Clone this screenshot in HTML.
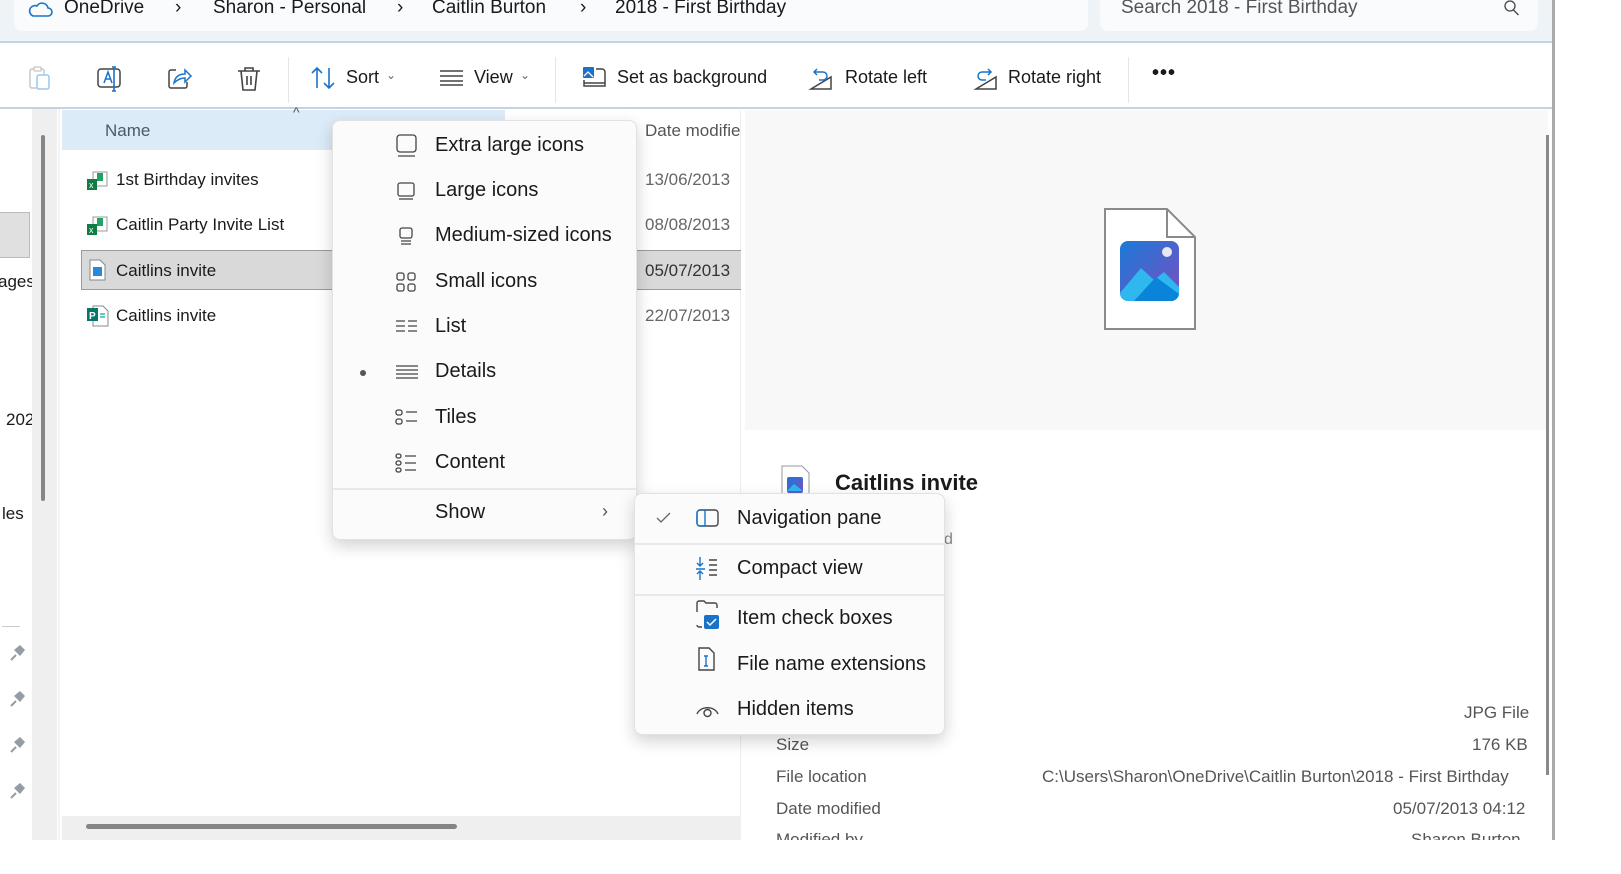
<!DOCTYPE html>
<html><head><meta charset="utf-8"><style>
*{margin:0;padding:0;box-sizing:border-box}
body{width:1621px;height:874px;background:#fff;font-family:"Liberation Sans","DejaVu Sans",sans-serif;color:#1a1a1a;position:relative;overflow:hidden}
.a{position:absolute}
.t{position:absolute;white-space:nowrap}
svg{position:absolute;overflow:visible}
</style></head><body>
<div class="a" style="left:0;top:0;width:1553px;height:42px;background:#eef3f8"></div>
<div class="a" style="left:14px;top:-10px;width:1074px;height:41px;background:#f9fbfd;border-radius:8px"></div>
<div class="a" style="left:1100px;top:-10px;width:438px;height:41px;background:#f9fbfd;border-radius:8px"></div>
<svg style="left:30px;top:0" width="24" height="18"><path d="M3 16h15a4 4 0 0 0 0-8 6 6 0 0 0-11-2A5 5 0 0 0 3 16z" fill="none" stroke="#1a73c8" stroke-width="1.6"/></svg>
<div class="t" style="left:64px;top:-3px;font-size:19px">OneDrive</div>
<div class="t" style="left:175px;top:-3px;font-size:19px">›</div>
<div class="t" style="left:213px;top:-3px;font-size:19px">Sharon - Personal</div>
<div class="t" style="left:397px;top:-3px;font-size:19px">›</div>
<div class="t" style="left:432px;top:-3px;font-size:19px">Caitlin Burton</div>
<div class="t" style="left:580px;top:-3px;font-size:19px">›</div>
<div class="t" style="left:615px;top:-3px;font-size:19px">2018 - First Birthday</div>
<div class="t" style="left:1121px;top:-3px;font-size:19px;color:#555">Search 2018 - First Birthday</div>
<svg style="left:1502px;top:0" width="18" height="18"><circle cx="8" cy="6" r="5" fill="none" stroke="#444" stroke-width="1.3"/><path d="M11.5 10l5 5" stroke="#444" stroke-width="1.3"/></svg>
<div class="a" style="left:0;top:41px;width:1553px;height:2px;background:#c4d3df"></div>
<div class="a" style="left:0;top:43px;width:1553px;height:65px;background:#fff"></div>
<div class="a" style="left:0;top:107px;width:1553px;height:2px;background:#c4d3df"></div>
<svg style="left:28px;top:66px" width="24" height="24"><rect x="2" y="3" width="14" height="19" rx="2" fill="none" stroke="#c7c7c7" stroke-width="1.5"/><rect x="6" y="1" width="7" height="4" rx="1" fill="#fff" stroke="#c7c7c7" stroke-width="1.3"/><rect x="9" y="9" width="12" height="14" rx="2" fill="#fff" stroke="#9cc7ee" stroke-width="1.5"/></svg>
<svg style="left:97px;top:66px" width="26" height="26"><rect x="1" y="3" width="22" height="18" rx="3" fill="none" stroke="#444" stroke-width="1.5"/><path d="M7 17l4-11 4 11M8.5 13h5" fill="none" stroke="#1a73c8" stroke-width="1.5"/><path d="M17 1v24M15 1h4M15 25h4" stroke="#1a73c8" stroke-width="1.6" /></svg>
<svg style="left:167px;top:66px" width="26" height="26"><path d="M9 4H4a2 2 0 0 0-2 2v14a2 2 0 0 0 2 2h14a2 2 0 0 0 2-2v-4" fill="none" stroke="#444" stroke-width="1.5"/><path d="M7 17c1-6 5-9 11-9V4l6 6-6 6v-4c-5 0-8 2-11 5z" fill="none" stroke="#1a73c8" stroke-width="1.5"/></svg>
<svg style="left:237px;top:66px" width="24" height="26"><path d="M1 5h22M8 5V2h8v3M4 5l2 19h12l2-19M10 10v9M14 10v9" fill="none" stroke="#444" stroke-width="1.6"/></svg>
<div class="a" style="left:288px;top:57px;width:1px;height:46px;background:#e5e5e5"></div>
<svg style="left:311px;top:66px" width="26" height="24"><path d="M6 22V2M1 7l5-5 5 5" fill="none" stroke="#1a73c8" stroke-width="1.6"/><path d="M18 2v20M13 17l5 5 5-5" fill="none" stroke="#1a73c8" stroke-width="1.6"/></svg>
<div class="t" style="left:346px;top:67px;font-size:18px">Sort</div>
<div class="t" style="left:386px;top:68px;font-size:12px;color:#666">⌄</div>
<svg style="left:440px;top:70px" width="24" height="16"><path d="M0 1h23M0 6h23M0 11h23M0 15h23" stroke="#444" stroke-width="1.4"/></svg>
<div class="t" style="left:474px;top:67px;font-size:18px">View</div>
<div class="t" style="left:520px;top:68px;font-size:12px;color:#666">⌄</div>
<div class="a" style="left:555px;top:57px;width:1px;height:46px;background:#e5e5e5"></div>
<svg style="left:582px;top:66px" width="26" height="24"><rect x="1" y="1" width="11" height="11" rx="1" fill="#1a73c8"/><path d="M2 10l4-4 5 5" stroke="#fff" stroke-width="1.3" fill="none"/><path d="M14 3h6a3 3 0 0 1 3 3v14H2v-6M2 17h21" fill="none" stroke="#444" stroke-width="1.5"/></svg>
<div class="t" style="left:617px;top:67px;font-size:18px">Set as background</div>
<svg style="left:810px;top:67px" width="24" height="24"><path d="M1 22h20V10z" fill="none" stroke="#444" stroke-width="1.5"/><path d="M7 2L4 5l3 3M4 5h9a4 4 0 0 1 0 8H9" fill="none" stroke="#1a73c8" stroke-width="1.5"/></svg>
<div class="t" style="left:845px;top:67px;font-size:18px">Rotate left</div>
<svg style="left:973px;top:67px" width="24" height="24"><path d="M3 22h20V10z" fill="none" stroke="#444" stroke-width="1.5"/><path d="M15 2l3 3-3 3M18 5H9a4 4 0 0 0 0 8h4" fill="none" stroke="#1a73c8" stroke-width="1.5"/></svg>
<div class="t" style="left:1008px;top:67px;font-size:18px">Rotate right</div>
<div class="a" style="left:1128px;top:57px;width:1px;height:46px;background:#e5e5e5"></div>
<div class="t" style="left:1152px;top:62px;font-size:20px;letter-spacing:1px;font-weight:bold">•••</div>
<div class="a" style="left:0;top:109px;width:32px;height:731px;background:#fff"></div>
<div class="a" style="left:0;top:212px;width:30px;height:46px;background:#e0e0e0;border:1px solid #bbb;border-left:none"></div>
<div class="t" style="left:-2px;top:272px;font-size:17px">ages</div>
<div class="t" style="left:6px;top:410px;font-size:17px">202</div>
<div class="t" style="left:2px;top:504px;font-size:17px">les</div>
<div class="a" style="left:2px;top:626px;width:18px;height:1px;background:#ccc"></div>
<svg style="left:10px;top:644px" width="16" height="180"><g fill="#959ca3"><path d="M4 6l6-5 5 5-5 6z"/><path d="M4 52l6-5 5 5-5 6z"/><path d="M4 98l6-5 5 5-5 6z"/><path d="M4 144l6-5 5 5-5 6z"/></g><g stroke="#959ca3" stroke-width="2"><path d="M1 16l5-5M1 62l5-5M1 108l5-5M1 154l5-5"/></g></svg>
<div class="a" style="left:32px;top:109px;width:25px;height:731px;background:#efefef"></div>
<div class="a" style="left:41px;top:135px;width:4px;height:366px;background:#868686;border-radius:2px"></div>
<div class="a" style="left:58px;top:109px;width:2px;height:731px;background:#f4f4f4"></div>
<div class="a" style="left:62px;top:110px;width:443px;height:40px;background:#dcebf8"></div>
<div class="t" style="left:105px;top:121px;font-size:17px;color:#4d5a66">Name</div>
<div class="t" style="left:293px;top:104px;font-size:14px;color:#555">^</div>
<div class="a" style="left:740px;top:110px;width:1px;height:730px;background:#eee"></div>
<div class="t" style="left:645px;top:121px;font-size:17px;color:#555">Date modifie</div>
<svg style="left:87px;top:170px" width="22" height="22"><rect x="6" y="2" width="14" height="14" fill="#fff" stroke="#999"/><rect x="10" y="3" width="6" height="8" fill="#21a366"/><rect x="0" y="9" width="10" height="11" fill="#107c41"/><text x="2" y="18" font-size="9" fill="#fff" font-family="Liberation Sans">x</text></svg>
<div class="t" style="left:116px;top:170px;font-size:17px">1st Birthday invites</div>
<svg style="left:87px;top:215px" width="22" height="22"><rect x="6" y="2" width="14" height="14" fill="#fff" stroke="#999"/><rect x="10" y="3" width="6" height="8" fill="#21a366"/><rect x="0" y="9" width="10" height="11" fill="#107c41"/><text x="2" y="18" font-size="9" fill="#fff" font-family="Liberation Sans">x</text></svg>
<div class="t" style="left:116px;top:215px;font-size:17px">Caitlin Party Invite List</div>
<div class="a" style="left:81px;top:250px;width:660px;height:40px;background:#d9d9d9;border:1px solid #9b9b9b;border-right:none"></div>
<svg style="left:89px;top:259px" width="18" height="22"><path d="M1 1h10l5 5v15H1z" fill="#fff" stroke="#888"/><rect x="4" y="8" width="9" height="9" fill="#2b8ad8"/></svg>
<div class="t" style="left:116px;top:261px;font-size:17px">Caitlins invite</div>
<svg style="left:87px;top:305px" width="22" height="22"><path d="M6 1h10l5 5v15H6z" fill="#fff" stroke="#888"/><rect x="0" y="3" width="11" height="13" fill="#077568"/><text x="2" y="14" font-size="10" fill="#fff" font-weight="bold" font-family="Liberation Sans">P</text><path d="M13 9h5M13 12h5" stroke="#2bb8a8" stroke-width="1.5"/></svg>
<div class="t" style="left:116px;top:306px;font-size:17px">Caitlins invite</div>
<div class="t" style="left:645px;top:170px;font-size:17px;color:#666">13/06/2013</div>
<div class="t" style="left:645px;top:215px;font-size:17px;color:#666">08/08/2013</div>
<div class="t" style="left:645px;top:261px;font-size:17px;color:#333">05/07/2013</div>
<div class="t" style="left:645px;top:306px;font-size:17px;color:#666">22/07/2013</div>
<div class="a" style="left:62px;top:816px;width:678px;height:24px;background:#efefef"></div>
<div class="a" style="left:86px;top:824px;width:371px;height:5px;background:#858585;border-radius:3px"></div>
<div class="a" style="left:745px;top:110px;width:803px;height:320px;background:#f8f8f8"></div>
<svg style="left:1104px;top:208px" width="92" height="122"><path d="M1 1h62l28 28v92H1z" fill="#fff" stroke="#8a8a8a" stroke-width="2"/><path d="M63 1v28h28" fill="none" stroke="#8a8a8a" stroke-width="2"/><defs><linearGradient id="g" x1="0" y1="0" x2="1" y2="1"><stop offset="0" stop-color="#1a7ad8"/><stop offset="1" stop-color="#7a4fc0"/></linearGradient></defs><rect x="16" y="33" width="59" height="60" rx="8" fill="url(#g)"/><circle cx="63" cy="44" r="5" fill="#e8e8f0"/><path d="M16 85l21-25 13 12 10-8 15 15v6a8 8 0 0 1-8 8H24a8 8 0 0 1-8-8z" fill="#2fb8f0"/><path d="M30 93l22-24 23 17v-1 1a8 8 0 0 1-8 7z" fill="#0a84d8"/></svg>
<div class="a" style="left:1546px;top:135px;width:3px;height:640px;background:#8a8a8a"></div>
<div class="a" style="left:1552px;top:0;width:3px;height:842px;background:#aaa"></div>
<svg style="left:781px;top:465px" width="30" height="36"><path d="M1 1h20l7 7v27H1z" fill="#fff" stroke="#999"/><rect x="6" y="12" width="16" height="16" rx="2" fill="url(#g)"/><path d="M6 26l7-7 9 7z" fill="#2fb8f0"/></svg>
<div class="t" style="left:835px;top:470px;font-size:22px;font-weight:bold">Caitlins invite</div>
<div class="t" style="left:944px;top:531px;font-size:16px;color:#888">d</div>
<div class="t" style="left:1464px;top:703px;font-size:17px;color:#555">JPG File</div>
<div class="t" style="left:776px;top:735px;font-size:17px;color:#555">Size</div>
<div class="t" style="left:1472px;top:735px;font-size:17px;color:#555">176 KB</div>
<div class="t" style="left:776px;top:767px;font-size:17px;color:#555">File location</div>
<div class="t" style="left:1042px;top:767px;font-size:17px;color:#555">C:\Users\Sharon\OneDrive\Caitlin Burton\2018 - First Birthday</div>
<div class="t" style="left:776px;top:799px;font-size:17px;color:#555">Date modified</div>
<div class="t" style="left:1393px;top:799px;font-size:17px;color:#555">05/07/2013 04:12</div>
<div class="a" style="left:745px;top:830px;width:803px;height:10px;overflow:hidden"><div class="t" style="left:31px;top:0;font-size:17px;color:#555">Modified by</div><div class="t" style="left:666px;top:0;font-size:17px;color:#555">Sharon Burton</div></div>
<div class="a" style="left:0;top:840px;width:1621px;height:34px;background:#fff"></div>
<div class="a" style="left:332px;top:120px;width:305px;height:420px;background:#fbfbfb;border:1px solid #e2e2e2;border-radius:8px;box-shadow:0 6px 16px rgba(0,0,0,.18)"></div>
<svg style="left:396px;top:134px" width="22" height="360"><g fill="none" stroke="#444" stroke-width="1.3">
<rect x="1" y="1" width="19" height="17" rx="3"/><path d="M2 22h17"/>
<rect x="2" y="49" width="16" height="13" rx="2"/><path d="M3 65h14"/>
<rect x="4" y="94" width="12" height="10" rx="2"/><path d="M5 107h10M5 110h10"/>
<rect x="1" y="139" width="7" height="7" rx="2"/><rect x="12" y="139" width="7" height="7" rx="2"/><rect x="1" y="150" width="7" height="7" rx="2"/><rect x="12" y="150" width="7" height="7" rx="2"/>
<path d="M0 187h9M0 192h9M0 197h9M12 187h9M12 192h9M12 197h9"/>
<path d="M0 232h22M0 236h22M0 240h22M0 244h22"/>
<rect x="0" y="276" width="6" height="5" rx="2"/><rect x="0" y="285" width="6" height="5" rx="2"/><path d="M10 278h11M10 287h11"/>
<rect x="0" y="320" width="5" height="4" rx="2"/><rect x="0" y="327" width="5" height="4" rx="2"/><rect x="0" y="334" width="5" height="4" rx="2"/><path d="M9 322h11M9 329h11M9 336h11"/>
</g></svg>
<div class="t" style="left:435px;top:134px;font-size:20px">Extra large icons</div>
<div class="t" style="left:435px;top:179px;font-size:20px">Large icons</div>
<div class="t" style="left:435px;top:224px;font-size:20px">Medium-sized icons</div>
<div class="t" style="left:435px;top:270px;font-size:20px">Small icons</div>
<div class="t" style="left:435px;top:315px;font-size:20px">List</div>
<div class="a" style="left:360px;top:370px;width:6px;height:6px;border-radius:3px;background:#555"></div>
<div class="t" style="left:435px;top:360px;font-size:20px">Details</div>
<div class="t" style="left:435px;top:406px;font-size:20px">Tiles</div>
<div class="t" style="left:435px;top:451px;font-size:20px">Content</div>
<div class="a" style="left:333px;top:488px;width:303px;height:2px;background:#e8e8e8"></div>
<div class="t" style="left:435px;top:501px;font-size:20px">Show</div>
<div class="t" style="left:602px;top:501px;font-size:18px;color:#555">›</div>
<div class="a" style="left:634px;top:493px;width:311px;height:242px;background:#fbfbfb;border:1px solid #e2e2e2;border-radius:8px;box-shadow:0 6px 16px rgba(0,0,0,.18)"></div>
<svg style="left:655px;top:508px" width="20" height="20"><path d="M2 10l4 4 9-9" fill="none" stroke="#666" stroke-width="1.3"/></svg>
<svg style="left:696px;top:508px" width="24" height="216"><g fill="none" stroke-width="1.4">
<rect x="1" y="2" width="21" height="16" rx="3" stroke="#444"/><path d="M9 2v16M6 2H4a3 3 0 0 0-3 3v10a3 3 0 0 0 3 3h5" stroke="#1a73c8"/>
<path d="M4 49v9M1 55l3 3 3-3M4 72v-9M1 66l3-3 3 3M0 61h9" stroke="#1a73c8"/><path d="M13 52h8M13 57h8M13 62h8M13 67h8" stroke="#444"/>
<path d="M1 104v-9a2 2 0 0 1 2-2h5l2 2h9a2 2 0 0 1 2 2v3M6 119H3a2 2 0 0 1-2-2" stroke="#444"/>
<path d="M3 140h10l5 5v17H3z" stroke="#444"/><path d="M8 148h4M10 148v10M8 158h4" stroke="#1a73c8"/>
<path d="M1 206a11 9 0 0 1 21 0" stroke="#444"/><circle cx="11.5" cy="205" r="3.5" stroke="#444"/>
</g><rect x="8" y="107" width="15" height="14" rx="2" fill="#1a73c8"/><path d="M11 114l3 3 6-6" fill="none" stroke="#fff" stroke-width="1.5"/></svg>
<div class="t" style="left:737px;top:507px;font-size:20px">Navigation pane</div>
<div class="a" style="left:635px;top:543px;width:309px;height:2px;background:#e8e8e8"></div>
<div class="t" style="left:737px;top:557px;font-size:20px">Compact view</div>
<div class="a" style="left:635px;top:594px;width:309px;height:2px;background:#e8e8e8"></div>
<div class="t" style="left:737px;top:607px;font-size:20px">Item check boxes</div>
<div class="t" style="left:737px;top:653px;font-size:20px">File name extensions</div>
<div class="t" style="left:737px;top:698px;font-size:20px">Hidden items</div>
</body></html>
